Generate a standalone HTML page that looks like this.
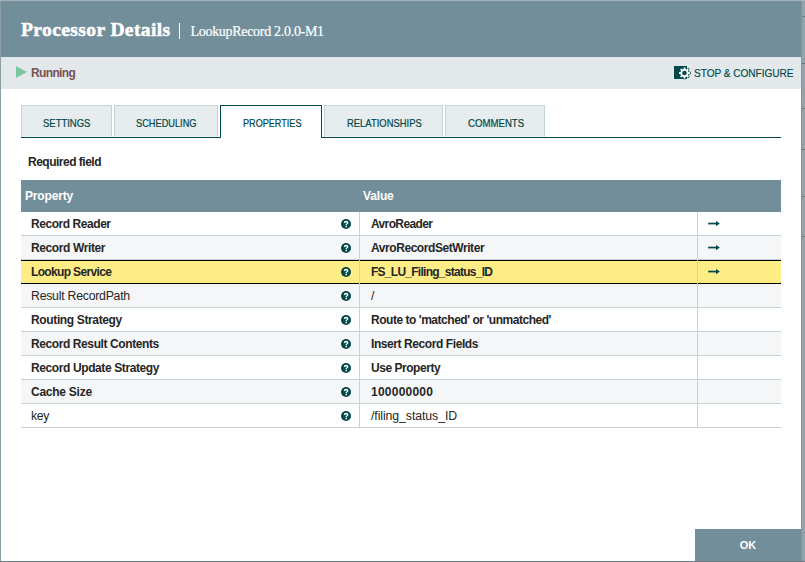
<!DOCTYPE html>
<html><head><meta charset="utf-8">
<style>
html,body{margin:0;padding:0;}
body{width:805px;height:562px;overflow:hidden;background:#9aabb3;position:relative;font-family:"Liberation Sans",sans-serif;}
.abs{position:absolute;white-space:nowrap;}
#dlg{position:absolute;left:1px;top:1px;width:800px;height:560px;background:#fff;overflow:hidden;}
#hdr{position:absolute;left:0;top:0;width:800px;height:56px;background:#728e9b;}
#title{left:20px;top:17px;font-family:"Liberation Serif",serif;font-weight:bold;font-size:19.5px;letter-spacing:0.4px;-webkit-text-stroke:0.5px #fff;line-height:24px;color:#fff;}
#sep{left:178px;top:22px;width:1px;height:16px;background:#fff;}
#sub{left:189.5px;top:21px;font-family:"Liberation Serif",serif;font-size:14px;letter-spacing:-0.3px;-webkit-text-stroke:0.2px #fff;line-height:20px;color:#fff;}
#status{position:absolute;left:0;top:56px;width:800px;height:32px;background:#e3e8eb;}
#play{left:14.6px;top:9px;width:0;height:0;border-top:6px solid transparent;border-bottom:6px solid transparent;border-left:11.4px solid #7dc7a0;}
#running{left:30px;top:9px;font-weight:bold;font-size:12px;letter-spacing:-0.65px;line-height:14px;color:#775351;}
#stop{left:693px;top:9px;font-size:11.5px;letter-spacing:-0.05px;-webkit-text-stroke:0.15px #004849;transform:scaleX(0.88);transform-origin:0 0;line-height:14px;color:#004849;}
.tab{position:absolute;top:104px;height:32px;background:#e7ecee;border:1px solid #c5d4d4;border-bottom:1px solid #f3f6f7;box-sizing:border-box;text-align:center;font-size:10.3px;-webkit-text-stroke:0.2px #004849;line-height:35px;color:#004849;}
.tt{position:absolute;left:0;top:0;white-space:nowrap;transform-origin:0 0;}
.tab.sel{background:#fff;border-color:#004849;border-bottom:none;height:33px;z-index:2;}
#tabline{position:absolute;left:20px;top:136px;width:760px;height:1px;background:#004849;}
#req{left:27px;top:154px;font-weight:bold;font-size:12px;letter-spacing:-0.5px;line-height:14px;color:#262626;}
#thead{position:absolute;left:20px;top:179px;width:760px;height:32px;background:#728e9b;}
.th{position:absolute;top:0;line-height:33px;font-weight:bold;font-size:12px;letter-spacing:-0.15px;color:#fff;}
.row{position:absolute;left:20px;width:760px;height:24px;box-sizing:border-box;border-bottom:1px solid #c7d2d7;background:#fff;}
.row.odd{background:#f4f6f7;}
.row.sel{background:#feec84;border-top:1px solid #000;border-bottom:1px solid #000;}
.row.sel .c{top:0;}
.row.sel .q{top:5.5px;}
.row.sel .arr{top:5px;}
.row.sel .vdiv{top:-1px;height:24px;}
.c{position:absolute;top:1px;height:23px;line-height:23px;font-size:12.3px;color:#262626;}
.c.b{font-weight:bold;font-size:12px;letter-spacing:-0.5px;}
.vdiv{position:absolute;top:0;width:1px;height:23px;background:#c7d2d7;}
.q{position:absolute;left:320px;top:6.5px;width:10px;height:10px;}
.arr{position:absolute;left:687px;top:6px;width:14px;height:10px;}
#ok{position:absolute;left:694px;top:528px;width:106px;height:32px;background:#728e9b;color:#fff;font-weight:bold;font-size:11px;line-height:32px;text-align:center;}
</style></head><body>
<div style="position:absolute;left:0;top:0;width:805px;height:1px;background:#a3b2b9"></div>
<div style="position:absolute;left:0;top:1px;width:1px;height:561px;background:#8e9ea6"></div>
<div style="position:absolute;left:801px;top:1px;width:4px;height:561px;background:#93a3ab"></div>
<div style="position:absolute;left:801px;top:1px;width:1px;height:561px;background:#84949c"></div>
<div style="position:absolute;left:0;top:561px;width:805px;height:1px;background:#6e7d85"></div>
<div style="position:absolute;left:802px;top:16px;width:3px;height:1px;background:#66767e"></div><div style="position:absolute;left:802px;top:63px;width:3px;height:1px;background:#66767e"></div><div style="position:absolute;left:802px;top:108px;width:3px;height:1px;background:#66767e"></div><div style="position:absolute;left:802px;top:149px;width:3px;height:1px;background:#66767e"></div><div style="position:absolute;left:802px;top:196px;width:3px;height:1px;background:#66767e"></div><div style="position:absolute;left:802px;top:236px;width:3px;height:1px;background:#66767e"></div>
<div id="dlg">
  <div id="hdr">
    <div class="abs" id="title">Processor Details</div>
    <div class="abs" id="sep"></div>
    <div class="abs" id="sub">LookupRecord 2.0.0-M1</div>
  </div>
  <div id="status">
    <div class="abs" id="play"></div>
    <div class="abs" id="running">Running</div>
    <svg class="abs" style="left:671px;top:7px" width="20" height="18" viewBox="0 0 20 18">
      <rect x="2" y="2" width="13" height="13" fill="#004849"/>
      <path d="M10.55 4.29 L11.38 4.02 L11.37 2.70 L13.63 2.70 L13.62 4.02 L14.45 4.29 L15.23 4.69 L16.16 3.75 L17.75 5.34 L16.81 6.27 L17.21 7.05 L17.48 7.88 L18.80 7.87 L18.80 10.13 L17.48 10.12 L17.21 10.95 L16.81 11.73 L17.75 12.66 L16.16 14.25 L15.23 13.31 L14.45 13.71 L13.62 13.98 L13.63 15.30 L11.37 15.30 L11.38 13.98 L10.55 13.71 L9.77 13.31 L8.84 14.25 L7.25 12.66 L8.19 11.73 L7.79 10.95 L7.52 10.12 L6.20 10.13 L6.20 7.87 L7.52 7.88 L7.79 7.05 L8.19 6.27 L7.25 5.34 L8.84 3.75 L9.77 4.69Z" fill="#004849"/>
      <path d="M10.93 5.21 L11.60 5.00 L11.53 3.59 L13.47 3.59 L13.40 5.00 L14.07 5.21 L14.69 5.54 L15.64 4.49 L17.01 5.86 L15.96 6.81 L16.29 7.43 L16.50 8.10 L17.91 8.03 L17.91 9.97 L16.50 9.90 L16.29 10.57 L15.96 11.19 L17.01 12.14 L15.64 13.51 L14.69 12.46 L14.07 12.79 L13.40 13.00 L13.47 14.41 L11.53 14.41 L11.60 13.00 L10.93 12.79 L10.31 12.46 L9.36 13.51 L7.99 12.14 L9.04 11.19 L8.71 10.57 L8.50 9.90 L7.09 9.97 L7.09 8.03 L8.50 8.10 L8.71 7.43 L9.04 6.81 L7.99 5.86 L9.36 4.49 L10.31 5.54Z" fill="#fff"/>
      <circle cx="12.5" cy="9" r="2.3" fill="#004849"/>
    </svg>
    <div class="abs" id="stop">STOP &amp; CONFIGURE</div>
  </div>
  <div id="tabline"></div>
  <div class="tab" style="left:20px;width:91px"><span class="tt" id="t1" style="left:21.10px;transform:scaleX(0.921)">SETTINGS</span></div>
  <div class="tab" style="left:113px;width:104px"><span class="tt" id="t2" style="left:21.20px;transform:scaleX(0.896)">SCHEDULING</span></div>
  <div class="tab sel" style="left:219px;width:102px"><span class="tt" id="t3" style="left:21.80px;transform:scaleX(0.883)">PROPERTIES</span></div>
  <div class="tab" style="left:323px;width:119px"><span class="tt" id="t4" style="left:21.70px;transform:scaleX(0.916)">RELATIONSHIPS</span></div>
  <div class="tab" style="left:444px;width:100px"><span class="tt" id="t5" style="left:21.70px;transform:scaleX(0.935)">COMMENTS</span></div>
  <div class="abs" id="req">Required field</div>
  <div id="thead">
    <div class="th" style="left:4px">Property</div>
    <div class="th" style="left:342px">Value</div>
  </div>
  <div id="rows"><div class="row" style="top:211px"><div class="c b" style="left:10px;letter-spacing:-0.444px">Record Reader</div><svg class="q" viewBox="0 0 10 10"><circle cx="5" cy="5" r="5" fill="#004849"/><path d="M3.5 4.1 C3.5 2.9 4.2 2.4 5.1 2.4 C6 2.4 6.7 2.9 6.7 3.7 C6.7 4.7 5.2 4.8 5.2 6.0" stroke="#fff" stroke-width="1.5" fill="none"/><rect x="4.45" y="6.7" width="1.5" height="1.5" fill="#fff"/></svg><div class="vdiv" style="left:338px"></div><div class="c b" style="left:350px;letter-spacing:-0.636px">AvroReader</div><div class="vdiv" style="left:676px"></div><svg class="arr" viewBox="0 0 14 10"><rect x="0.2" y="4.7" width="8.5" height="1.7" fill="#004849"/><path d="M8 2.9 L11.8 5.55 L8 8.2 Z" fill="#004849"/></svg></div>
<div class="row odd" style="top:235px"><div class="c b" style="left:10px;letter-spacing:-0.390px">Record Writer</div><svg class="q" viewBox="0 0 10 10"><circle cx="5" cy="5" r="5" fill="#004849"/><path d="M3.5 4.1 C3.5 2.9 4.2 2.4 5.1 2.4 C6 2.4 6.7 2.9 6.7 3.7 C6.7 4.7 5.2 4.8 5.2 6.0" stroke="#fff" stroke-width="1.5" fill="none"/><rect x="4.45" y="6.7" width="1.5" height="1.5" fill="#fff"/></svg><div class="vdiv" style="left:338px"></div><div class="c b" style="left:350px;letter-spacing:-0.434px">AvroRecordSetWriter</div><div class="vdiv" style="left:676px"></div><svg class="arr" viewBox="0 0 14 10"><rect x="0.2" y="4.7" width="8.5" height="1.7" fill="#004849"/><path d="M8 2.9 L11.8 5.55 L8 8.2 Z" fill="#004849"/></svg></div>
<div class="row sel" style="top:259px"><div class="c b" style="left:10px;letter-spacing:-0.654px">Lookup Service</div><svg class="q" viewBox="0 0 10 10"><circle cx="5" cy="5" r="5" fill="#004849"/><path d="M3.5 4.1 C3.5 2.9 4.2 2.4 5.1 2.4 C6 2.4 6.7 2.9 6.7 3.7 C6.7 4.7 5.2 4.8 5.2 6.0" stroke="#fff" stroke-width="1.5" fill="none"/><rect x="4.45" y="6.7" width="1.5" height="1.5" fill="#fff"/></svg><div class="vdiv" style="left:338px"></div><div class="c b" style="left:350px;letter-spacing:-0.734px">FS_LU_Filing_status_ID</div><div class="vdiv" style="left:676px"></div><svg class="arr" viewBox="0 0 14 10"><rect x="0.2" y="4.7" width="8.5" height="1.7" fill="#004849"/><path d="M8 2.9 L11.8 5.55 L8 8.2 Z" fill="#004849"/></svg></div>
<div class="row odd" style="top:283px"><div class="c" style="left:10px;letter-spacing:-0.250px">Result RecordPath</div><svg class="q" viewBox="0 0 10 10"><circle cx="5" cy="5" r="5" fill="#004849"/><path d="M3.5 4.1 C3.5 2.9 4.2 2.4 5.1 2.4 C6 2.4 6.7 2.9 6.7 3.7 C6.7 4.7 5.2 4.8 5.2 6.0" stroke="#fff" stroke-width="1.5" fill="none"/><rect x="4.45" y="6.7" width="1.5" height="1.5" fill="#fff"/></svg><div class="vdiv" style="left:338px"></div><div class="c" style="left:350px">/</div><div class="vdiv" style="left:676px"></div></div>
<div class="row" style="top:307px"><div class="c b" style="left:10px;letter-spacing:-0.361px">Routing Strategy</div><svg class="q" viewBox="0 0 10 10"><circle cx="5" cy="5" r="5" fill="#004849"/><path d="M3.5 4.1 C3.5 2.9 4.2 2.4 5.1 2.4 C6 2.4 6.7 2.9 6.7 3.7 C6.7 4.7 5.2 4.8 5.2 6.0" stroke="#fff" stroke-width="1.5" fill="none"/><rect x="4.45" y="6.7" width="1.5" height="1.5" fill="#fff"/></svg><div class="vdiv" style="left:338px"></div><div class="c b" style="left:350px;letter-spacing:-0.469px">Route to &#39;matched&#39; or &#39;unmatched&#39;</div><div class="vdiv" style="left:676px"></div></div>
<div class="row odd" style="top:331px"><div class="c b" style="left:10px;letter-spacing:-0.405px">Record Result Contents</div><svg class="q" viewBox="0 0 10 10"><circle cx="5" cy="5" r="5" fill="#004849"/><path d="M3.5 4.1 C3.5 2.9 4.2 2.4 5.1 2.4 C6 2.4 6.7 2.9 6.7 3.7 C6.7 4.7 5.2 4.8 5.2 6.0" stroke="#fff" stroke-width="1.5" fill="none"/><rect x="4.45" y="6.7" width="1.5" height="1.5" fill="#fff"/></svg><div class="vdiv" style="left:338px"></div><div class="c b" style="left:350px;letter-spacing:-0.418px">Insert Record Fields</div><div class="vdiv" style="left:676px"></div></div>
<div class="row" style="top:355px"><div class="c b" style="left:10px;letter-spacing:-0.394px">Record Update Strategy</div><svg class="q" viewBox="0 0 10 10"><circle cx="5" cy="5" r="5" fill="#004849"/><path d="M3.5 4.1 C3.5 2.9 4.2 2.4 5.1 2.4 C6 2.4 6.7 2.9 6.7 3.7 C6.7 4.7 5.2 4.8 5.2 6.0" stroke="#fff" stroke-width="1.5" fill="none"/><rect x="4.45" y="6.7" width="1.5" height="1.5" fill="#fff"/></svg><div class="vdiv" style="left:338px"></div><div class="c b" style="left:350px;letter-spacing:-0.465px">Use Property</div><div class="vdiv" style="left:676px"></div></div>
<div class="row odd" style="top:379px"><div class="c b" style="left:10px;letter-spacing:-0.253px">Cache Size</div><svg class="q" viewBox="0 0 10 10"><circle cx="5" cy="5" r="5" fill="#004849"/><path d="M3.5 4.1 C3.5 2.9 4.2 2.4 5.1 2.4 C6 2.4 6.7 2.9 6.7 3.7 C6.7 4.7 5.2 4.8 5.2 6.0" stroke="#fff" stroke-width="1.5" fill="none"/><rect x="4.45" y="6.7" width="1.5" height="1.5" fill="#fff"/></svg><div class="vdiv" style="left:338px"></div><div class="c b" style="left:350px;letter-spacing:0.234px">100000000</div><div class="vdiv" style="left:676px"></div></div>
<div class="row" style="top:403px"><div class="c" style="left:10px;letter-spacing:-0.350px">key</div><svg class="q" viewBox="0 0 10 10"><circle cx="5" cy="5" r="5" fill="#004849"/><path d="M3.5 4.1 C3.5 2.9 4.2 2.4 5.1 2.4 C6 2.4 6.7 2.9 6.7 3.7 C6.7 4.7 5.2 4.8 5.2 6.0" stroke="#fff" stroke-width="1.5" fill="none"/><rect x="4.45" y="6.7" width="1.5" height="1.5" fill="#fff"/></svg><div class="vdiv" style="left:338px"></div><div class="c" style="left:350px;letter-spacing:-0.085px">/filing_status_ID</div><div class="vdiv" style="left:676px"></div></div></div>
  <div id="ok">OK</div>
</div>
</body></html>
